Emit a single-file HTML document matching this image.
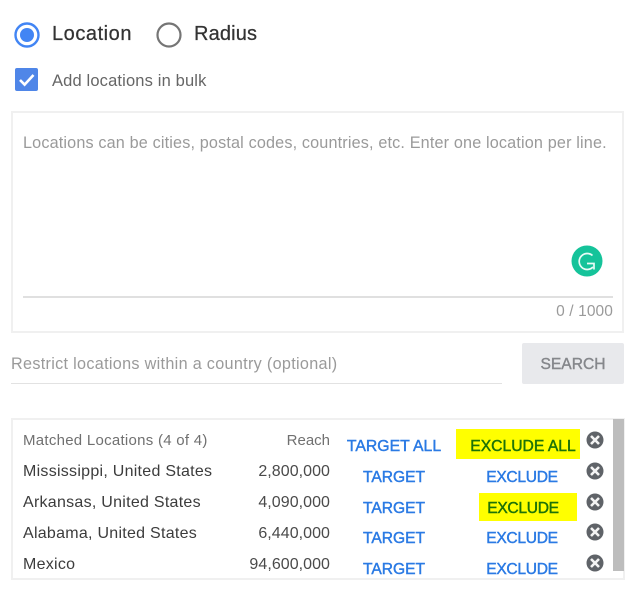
<!DOCTYPE html>
<html><head><meta charset="utf-8"><style>
html,body{margin:0;padding:0;background:#fff}
#p{position:relative;width:633px;height:600px;overflow:hidden;font-family:"Liberation Sans",sans-serif;background:#fff;filter:blur(.3px)}
.t{position:absolute;white-space:nowrap;line-height:20px;height:20px}
.r{text-align:right}
.c{text-align:center;color:#2a7ae4;font-size:15.6px;-webkit-text-stroke:.45px #2a7ae4}
.x{letter-spacing:-.3px}
.g{color:#1c7208;-webkit-text-stroke:.45px #1c7208}
.b{position:absolute;box-sizing:border-box}
.loc{color:#3c3c3c;font-size:16px;left:23px;letter-spacing:.27px}
.num{color:#4a4a4a;font-size:16px;right:303px;letter-spacing:.05px}
</style></head><body><div id="p">
<svg class="b" style="left:0;top:0" width="633" height="600">
<circle cx="27" cy="35" r="11.5" fill="none" stroke="#4285f4" stroke-width="2.4"/>
<circle cx="27" cy="35" r="7" fill="#4285f4"/>
<circle cx="169" cy="35" r="11.5" fill="none" stroke="#757575" stroke-width="2.2"/>
<rect x="15" y="68" width="23" height="23" rx="2" fill="#4f86e8"/>
<path d="M20 80l4.6 4.6L33.5 75" fill="none" stroke="#fff" stroke-width="2.6"/>
<circle cx="587" cy="261" r="15.5" fill="#15c39a"/>
<path d="M592.5 255.5A8 8 0 1 0 593 267" fill="none" stroke="#e8fbf6" stroke-width="1.7"/>
<path d="M587 263.5h7v6" fill="none" stroke="#e8fbf6" stroke-width="1.7"/>
</svg>
<div class="t" style="left:52px;top:24px;font-size:20px;color:#333;letter-spacing:.55px;-webkit-text-stroke:.25px #333">Location</div>
<div class="t" style="left:194px;top:24px;font-size:20px;color:#333;letter-spacing:.15px;-webkit-text-stroke:.25px #333">Radius</div>
<div class="t" style="left:52px;top:71px;font-size:16.5px;color:#666;letter-spacing:.15px">Add locations in bulk</div>
<div class="b" style="left:11px;top:111px;width:613px;height:222px;border:2px solid #f0f0f0"></div>
<div class="t" style="left:23px;top:133px;font-size:16.2px;color:#9a9a9a;letter-spacing:.16px">Locations can be cities, postal codes, countries, etc. Enter one location per line.</div>
<div class="b" style="left:23px;top:296px;width:590px;height:2px;background:#e0e0e0"></div>
<div class="t r" style="right:20px;top:302px;font-size:15.5px;color:#9a9a9a;letter-spacing:.1px">0 / 1000</div>
<div class="t" style="left:11px;top:354px;font-size:16.2px;color:#9a9a9a;letter-spacing:.31px">Restrict locations within a country (optional)</div>
<div class="b" style="left:11px;top:383px;width:491px;height:1px;background:#e2e2e2"></div>
<div class="b" style="left:522px;top:343px;width:102px;height:41px;background:#e8e9ec;border-radius:2px"></div>
<div class="t" style="left:522px;top:355px;width:102px;text-align:center;font-size:15.6px;color:#85878b;-webkit-text-stroke:.4px #85878b">SEARCH</div>
<div class="b" style="left:11px;top:418px;width:614px;height:162px;border:2px solid #f0f0f0"></div>
<div class="b" style="left:613px;top:419px;width:11px;height:152px;background:#bdbdbd"></div>
<div class="b" style="left:456px;top:429px;width:124px;height:30px;background:#ffff00"></div>
<div class="b" style="left:479px;top:493px;width:98px;height:28px;background:#ffff00"></div>
<div class="t" style="left:23px;top:431px;font-size:15px;color:#707070;letter-spacing:.27px">Matched Locations (4 of 4)</div>
<div class="t r" style="right:303px;top:431px;font-size:15px;color:#707070">Reach</div>
<div class="t loc" style="top:462px">Mississippi, United States</div><div class="t num" style="top:462px">2,800,000</div>
<div class="t loc" style="top:493px">Arkansas, United States</div><div class="t num" style="top:493px">4,090,000</div>
<div class="t loc" style="top:524px">Alabama, United States</div><div class="t num" style="top:524px">6,440,000</div>
<div class="t loc" style="top:555px">Mexico</div><div class="t num" style="top:555px">94,600,000</div>
<div class="t c" style="left:334px;width:120px;top:437px;font-size:15.8px">TARGET ALL</div>
<div class="t c" style="left:334px;width:120px;top:468px">TARGET</div>
<div class="t c" style="left:334px;width:120px;top:499px">TARGET</div>
<div class="t c" style="left:334px;width:120px;top:529px">TARGET</div>
<div class="t c" style="left:334px;width:120px;top:560px">TARGET</div>
<div class="t c g" style="left:463px;width:120px;top:437px;font-size:15.7px">EXCLUDE ALL</div>
<div class="t c x" style="left:462px;width:120px;top:468px">EXCLUDE</div>
<div class="t c x g" style="left:463px;width:120px;top:499px">EXCLUDE</div>
<div class="t c x" style="left:462px;width:120px;top:529px">EXCLUDE</div>
<div class="t c x" style="left:462px;width:120px;top:560px">EXCLUDE</div>
<svg class="b" style="left:0;top:0" width="633" height="600">
<g fill="#5f6368"><circle cx="595" cy="440" r="8.5"/><circle cx="595" cy="471" r="8.5"/><circle cx="595" cy="502" r="8.5"/><circle cx="595" cy="532" r="8.5"/><circle cx="595" cy="563" r="8.5"/></g>
<g stroke="#f4f4f4" stroke-width="2.6" fill="none"><path d="M591 436l8 8M599 436l-8 8"/><path d="M591 467l8 8M599 467l-8 8"/><path d="M591 498l8 8M599 498l-8 8"/><path d="M591 528l8 8M599 528l-8 8"/><path d="M591 559l8 8M599 559l-8 8"/></g>
</svg>
</div></body></html>
